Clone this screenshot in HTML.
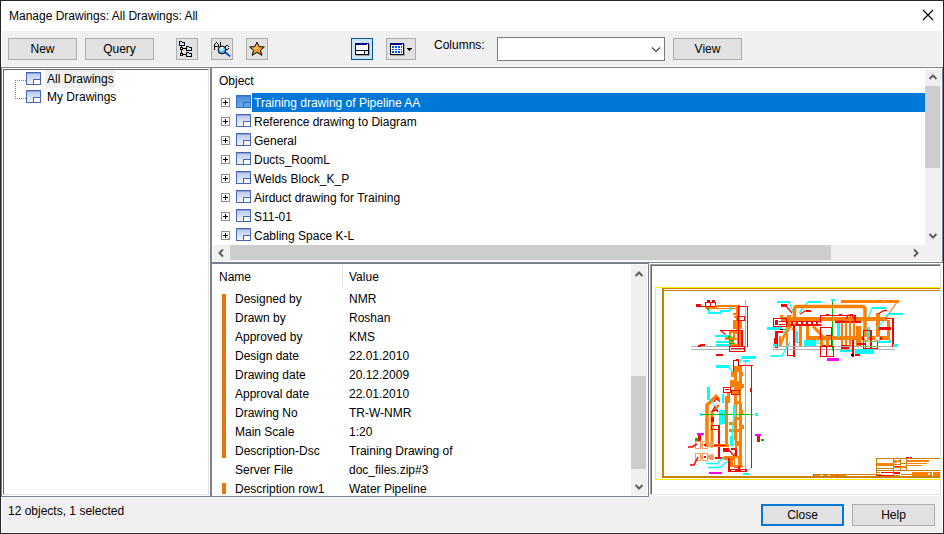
<!DOCTYPE html>
<html><head><meta charset="utf-8">
<style>
*{box-sizing:border-box;margin:0;padding:0}
html,body{width:944px;height:534px;overflow:hidden;background:#f0f0f0}
body{position:relative;font-family:"Liberation Sans",sans-serif;font-size:12px;color:#000}
.a{position:absolute}
.t{position:absolute;white-space:nowrap;line-height:14px;height:14px}
.btn{position:absolute;background:#e1e1e1;border:1px solid #adadad;text-align:center;line-height:20px;height:22px}
.ib{position:absolute;background:#e1e1e1;border:1px solid #adadad;width:22px;height:22px}
.row{position:absolute;height:19px;line-height:19px;white-space:nowrap}
</style></head><body>
<!-- window frame -->
<div class="a" style="left:0;top:0;width:944px;height:534px;border:1px solid #262626;background:#f0f0f0"></div>
<div class="a" style="left:1px;top:1px;width:942px;height:30px;background:#fff"></div>
<div class="a" style="left:1px;top:31px;width:1px;height:502px;background:#fff"></div>
<div class="a" style="left:942px;top:31px;width:1px;height:502px;background:#fff"></div>
<div class="a" style="left:1px;top:532px;width:942px;height:1px;background:#fff"></div>
<div class="t" style="left:9px;top:9px">Manage Drawings: All Drawings: All</div>
<svg class="a" style="left:922px;top:9px" width="12" height="12" viewBox="0 0 12 12"><path d="M1 1L11 11M11 1L1 11" stroke="#000" stroke-width="1.1"/></svg>

<!-- toolbar -->
<div class="btn" style="left:8px;top:38px;width:69px">New</div>
<div class="btn" style="left:85px;top:38px;width:69px">Query</div>
<div class="ib" style="left:176px;top:38px"></div>
<div class="ib" style="left:211px;top:38px"></div>
<div class="ib" style="left:246px;top:38px"></div>
<div class="ib" style="left:351px;top:38px;background:#cce4f7;border-color:#005499"></div>
<div class="ib" style="left:386px;top:38px;width:30px"></div>

<svg class="a" style="left:176px;top:38px" width="22" height="22" viewBox="0 0 22 22" shape-rendering="crispEdges"><rect x="3" y="3" width="3" height="1" fill="#000"/><rect x="3" y="4" width="6" height="4" fill="#000"/><rect x="4" y="4" width="2" height="1" fill="#c6ecfb"/><rect x="4" y="5" width="4" height="2" fill="#c6ecfb"/><rect x="10" y="8" width="3" height="1" fill="#000"/><rect x="10" y="9" width="6" height="4" fill="#000"/><rect x="11" y="9" width="2" height="1" fill="#c6ecfb"/><rect x="11" y="10" width="4" height="2" fill="#c6ecfb"/><rect x="10" y="14" width="3" height="1" fill="#000"/><rect x="10" y="15" width="6" height="4" fill="#000"/><rect x="11" y="15" width="2" height="1" fill="#c6ecfb"/><rect x="11" y="16" width="4" height="2" fill="#c6ecfb"/><rect x="5" y="8" width="1" height="8" fill="#000"/><rect x="4" y="9" width="3" height="3" fill="#000"/><rect x="5" y="10" width="1" height="1" fill="#fff"/><rect x="4" y="15" width="3" height="3" fill="#000"/><rect x="5" y="16" width="1" height="1" fill="#fff"/><rect x="7" y="10" width="3" height="1" fill="#000"/><rect x="7" y="16" width="3" height="1" fill="#000"/></svg>
<svg class="a" style="left:211px;top:38px" width="22" height="22" viewBox="0 0 22 22" shape-rendering="crispEdges"><defs><radialGradient id="lens" cx="0.45" cy="0.35" r="0.6"><stop offset="0" stop-color="#e8f8ff"/><stop offset="0.45" stop-color="#8fd4ff"/><stop offset="1" stop-color="#1e8ef0"/></radialGradient></defs><rect x="5" y="4" width="1" height="1" fill="#000"/><rect x="4" y="5" width="1" height="1" fill="#000"/><rect x="6" y="5" width="1" height="1" fill="#000"/><rect x="3" y="6" width="1" height="6" fill="#000"/><rect x="7" y="6" width="1" height="3" fill="#000"/><rect x="3" y="8" width="5" height="1" fill="#000"/><rect x="9" y="4" width="1" height="5" fill="#000"/><rect x="15" y="7" width="2" height="1" fill="#000"/><rect x="14" y="8" width="1" height="3" fill="#000"/><rect x="15" y="11" width="2" height="1" fill="#000"/><rect x="17" y="8" width="1" height="1" fill="#000"/><rect x="17" y="10" width="1" height="1" fill="#000"/><path d="M14 14.2L19.2 18.4" stroke="#0040ff" stroke-width="1.8" shape-rendering="auto"/><circle cx="11" cy="12" r="3.9" fill="url(#lens)" stroke="#000" stroke-width="1" shape-rendering="auto"/><rect x="10" y="9" width="2" height="1" fill="#fff"/></svg>
<svg class="a" style="left:246px;top:38px" width="22" height="22" viewBox="0 0 22 22"><defs><linearGradient id="stg" x1="0" y1="0" x2="0.3" y2="1"><stop offset="0" stop-color="#ffc860"/><stop offset="1" stop-color="#f08a10"/></linearGradient></defs><path d="M11 4.2L13.1 8.6L18.3 9L14.5 12.3L15.8 17.3L11 14.3L6.2 17.3L7.5 12.3L3.7 9L8.9 8.6Z" fill="url(#stg)" stroke="#000" stroke-width="1" stroke-linejoin="miter" stroke-miterlimit="3"/><path d="M9.6 9.6L10.4 10.8" stroke="#fff2c0" stroke-width="1.1"/></svg>
<svg class="a" style="left:351px;top:38px" width="22" height="22" viewBox="0 0 22 22" shape-rendering="crispEdges">
<rect x="5" y="6" width="14" height="12" fill="#9aa6b0"/>
<rect x="4" y="5" width="14" height="12" fill="#000"/>
<rect x="4" y="5" width="14" height="2" fill="#000080"/>
<rect x="5" y="7" width="12" height="5" fill="#fff"/>
<rect x="5" y="13" width="8" height="3" fill="#fff"/>
<rect x="14" y="13" width="3" height="3" fill="#d0f0ff"/>
<rect x="16" y="6" width="1" height="1" fill="#fff"/>
</svg>
<svg class="a" style="left:386px;top:38px" width="30" height="22" viewBox="0 0 30 22" shape-rendering="crispEdges">
<rect x="5" y="6" width="14" height="12" fill="#a8a8a8"/>
<rect x="4" y="5" width="14" height="12" fill="#000"/>
<rect x="4" y="5" width="14" height="2" fill="#000080"/>
<rect x="5" y="7" width="12" height="9" fill="#fff"/><rect x="16" y="6" width="1" height="1" fill="#fff"/>
<g fill="#0050ff"><rect x="6" y="8" width="2" height="2"/><rect x="9" y="8" width="2" height="2"/><rect x="12" y="8" width="2" height="2"/><rect x="15" y="8" width="1" height="2"/>
<rect x="6" y="11" width="2" height="1"/><rect x="9" y="11" width="2" height="1"/><rect x="12" y="11" width="2" height="1"/><rect x="15" y="11" width="1" height="1"/>
<rect x="6" y="13" width="2" height="2"/><rect x="9" y="13" width="2" height="2"/><rect x="12" y="13" width="2" height="2"/><rect x="15" y="13" width="1" height="2"/></g>
<rect x="21" y="10" width="5" height="1" fill="#000"/><rect x="22" y="11" width="3" height="1" fill="#000"/><rect x="23" y="12" width="1" height="1" fill="#000"/>
</svg>
<div class="t" style="left:434px;top:38px">Columns:</div>
<div class="a" style="left:497px;top:37px;width:168px;height:24px;background:#fff;border:1px solid #7a7a7a"></div>
<svg class="a" style="left:651px;top:47px" width="10" height="6" viewBox="0 0 10 6"><path d="M1 0.5L5 4.5L9 0.5" fill="none" stroke="#444" stroke-width="1.2"/></svg>
<div class="btn" style="left:673px;top:38px;width:69px">View</div>


<div class="a" style="left:1px;top:66px;width:942px;height:1px;background:#fafafa;"></div>
<div class="a" style="left:1px;top:497px;width:649px;height:1px;background:#fafafa;"></div>
<div class="a" style="left:1px;top:67px;width:942px;height:1px;background:#7a818c;"></div>
<div class="a" style="left:1px;top:496px;width:648px;height:1px;background:#7a818c;"></div>
<div class="a" style="left:1px;top:67px;width:1px;height:430px;background:#7a818c;"></div>
<div class="a" style="left:942px;top:67px;width:1px;height:196px;background:#7a818c;"></div>
<div class="a" style="left:2px;top:68px;width:208px;height:428px;background:#fff;"></div>
<div class="a" style="left:3px;top:69px;width:206px;height:426px;background:#fff;border-top:1px solid #696969;border-left:1px solid #696969;border-right:1px solid #e3e3e3;border-bottom:1px solid #e3e3e3"></div>
<div class="a" style="left:210px;top:67px;width:2px;height:430px;background:#7a818c;"></div>
<div class="a" style="left:212px;top:68px;width:730px;height:194px;background:#fff;"></div>
<div class="a" style="left:212px;top:262px;width:731px;height:1px;background:#7a818c;"></div>
<div class="a" style="left:212px;top:263px;width:437px;height:1px;background:#7a818c;"></div>
<div class="a" style="left:212px;top:264px;width:436px;height:232px;background:#fff;"></div>
<div class="a" style="left:648px;top:263px;width:1px;height:234px;background:#7a818c;"></div>
<div class="a" style="left:649px;top:263px;width:294px;height:233px;background:#fff;"></div>
<div class="a" style="left:650px;top:264px;width:291px;height:231px;background:#fff;border-top:1px solid #a0a0a0;border-left:1px solid #a0a0a0;border-right:1px solid #e3e3e3;border-bottom:1px solid #e3e3e3"></div>
<div class="a" style="left:651px;top:265px;width:289px;height:229px;background:#fff;border-top:1px solid #696969;border-left:1px solid #696969"></div>
<svg width="0" height="0" style="position:absolute"><defs><linearGradient id="gi" x1="0" y1="0" x2="0" y2="1"><stop offset="0" stop-color="#bccbec"/><stop offset="1" stop-color="#f2f5fc"/></linearGradient><linearGradient id="gs" x1="0" y1="0" x2="0" y2="1"><stop offset="0" stop-color="#4f90dc"/><stop offset="1" stop-color="#6aa8e8"/></linearGradient></defs></svg>
<div class="a" style="left:45px;top:70px;width:70px;height:18px;background:#f0f0f0;"></div>
<div class="t" style="left:47px;top:72px;">All Drawings</div>
<div class="t" style="left:47px;top:90px;">My Drawings</div>
<svg class="a" style="left:15px;top:80px" width="12" height="20" viewBox="0 0 12 20" shape-rendering="crispEdges"><g fill="#808080"><rect x="0" y="0" width="1" height="1"/><rect x="0" y="2" width="1" height="1"/><rect x="0" y="4" width="1" height="1"/><rect x="0" y="6" width="1" height="1"/><rect x="0" y="8" width="1" height="1"/><rect x="0" y="10" width="1" height="1"/><rect x="0" y="12" width="1" height="1"/><rect x="0" y="14" width="1" height="1"/><rect x="0" y="16" width="1" height="1"/><rect x="0" y="18" width="1" height="1"/><rect x="2" y="0" width="1" height="1"/><rect x="2" y="18" width="1" height="1"/><rect x="4" y="0" width="1" height="1"/><rect x="4" y="18" width="1" height="1"/><rect x="6" y="0" width="1" height="1"/><rect x="6" y="18" width="1" height="1"/><rect x="8" y="0" width="1" height="1"/><rect x="8" y="18" width="1" height="1"/><rect x="10" y="0" width="1" height="1"/><rect x="10" y="18" width="1" height="1"/></g></svg>
<svg class="a" style="left:26px;top:72px" width="15" height="13" viewBox="0 0 15 13" shape-rendering="crispEdges"><rect x="0" y="0" width="15" height="13" fill="#4466b8"/><rect x="1" y="2" width="13" height="10" fill="url(#gi)"/><rect x="0" y="1" width="15" height="1" fill="#5a78c0"/><rect x="1" y="1" width="13" height="1" fill="#8fa5d8"/><rect x="7" y="7" width="8" height="6" fill="#4466b8"/><rect x="8" y="8" width="6" height="4" fill="#fff"/></svg>
<svg class="a" style="left:26px;top:90px" width="15" height="13" viewBox="0 0 15 13" shape-rendering="crispEdges"><rect x="0" y="0" width="15" height="13" fill="#4466b8"/><rect x="1" y="2" width="13" height="10" fill="url(#gi)"/><rect x="0" y="1" width="15" height="1" fill="#5a78c0"/><rect x="1" y="1" width="13" height="1" fill="#8fa5d8"/><rect x="7" y="7" width="8" height="6" fill="#4466b8"/><rect x="8" y="8" width="6" height="4" fill="#fff"/></svg>
<div class="t" style="left:219px;top:74px;">Object</div>
<div class="a" style="left:252px;top:93px;width:673px;height:19px;background:#0078d7;"></div>
<div class="a" style="left:221px;top:98px;width:9px;height:9px;background:#fff;border:1px solid #919191"></div>
<div class="a" style="left:223px;top:102px;width:5px;height:1px;background:#000;"></div>
<div class="a" style="left:225px;top:100px;width:1px;height:5px;background:#000;"></div>
<svg class="a" style="left:236px;top:95px" width="15" height="13" viewBox="0 0 15 13" shape-rendering="crispEdges"><rect x="0" y="0" width="15" height="13" fill="#2a70c8"/><rect x="1" y="2" width="13" height="10" fill="url(#gs)"/><rect x="0" y="1" width="15" height="1" fill="#3a80d0"/><rect x="7" y="7" width="8" height="6" fill="#2a70c8"/><rect x="8" y="8" width="6" height="4" fill="#62a3e6"/></svg>
<div class="t" style="left:254px;top:96px;color:#fff">Training drawing of Pipeline AA</div>
<div class="a" style="left:221px;top:117px;width:9px;height:9px;background:#fff;border:1px solid #919191"></div>
<div class="a" style="left:223px;top:121px;width:5px;height:1px;background:#000;"></div>
<div class="a" style="left:225px;top:119px;width:1px;height:5px;background:#000;"></div>
<svg class="a" style="left:236px;top:114px" width="15" height="13" viewBox="0 0 15 13" shape-rendering="crispEdges"><rect x="0" y="0" width="15" height="13" fill="#4466b8"/><rect x="1" y="2" width="13" height="10" fill="url(#gi)"/><rect x="0" y="1" width="15" height="1" fill="#5a78c0"/><rect x="1" y="1" width="13" height="1" fill="#8fa5d8"/><rect x="7" y="7" width="8" height="6" fill="#4466b8"/><rect x="8" y="8" width="6" height="4" fill="#fff"/></svg>
<div class="t" style="left:254px;top:115px;">Reference drawing to Diagram</div>
<div class="a" style="left:221px;top:136px;width:9px;height:9px;background:#fff;border:1px solid #919191"></div>
<div class="a" style="left:223px;top:140px;width:5px;height:1px;background:#000;"></div>
<div class="a" style="left:225px;top:138px;width:1px;height:5px;background:#000;"></div>
<svg class="a" style="left:236px;top:133px" width="15" height="13" viewBox="0 0 15 13" shape-rendering="crispEdges"><rect x="0" y="0" width="15" height="13" fill="#4466b8"/><rect x="1" y="2" width="13" height="10" fill="url(#gi)"/><rect x="0" y="1" width="15" height="1" fill="#5a78c0"/><rect x="1" y="1" width="13" height="1" fill="#8fa5d8"/><rect x="7" y="7" width="8" height="6" fill="#4466b8"/><rect x="8" y="8" width="6" height="4" fill="#fff"/></svg>
<div class="t" style="left:254px;top:134px;">General</div>
<div class="a" style="left:221px;top:155px;width:9px;height:9px;background:#fff;border:1px solid #919191"></div>
<div class="a" style="left:223px;top:159px;width:5px;height:1px;background:#000;"></div>
<div class="a" style="left:225px;top:157px;width:1px;height:5px;background:#000;"></div>
<svg class="a" style="left:236px;top:152px" width="15" height="13" viewBox="0 0 15 13" shape-rendering="crispEdges"><rect x="0" y="0" width="15" height="13" fill="#4466b8"/><rect x="1" y="2" width="13" height="10" fill="url(#gi)"/><rect x="0" y="1" width="15" height="1" fill="#5a78c0"/><rect x="1" y="1" width="13" height="1" fill="#8fa5d8"/><rect x="7" y="7" width="8" height="6" fill="#4466b8"/><rect x="8" y="8" width="6" height="4" fill="#fff"/></svg>
<div class="t" style="left:254px;top:153px;">Ducts_RoomL</div>
<div class="a" style="left:221px;top:174px;width:9px;height:9px;background:#fff;border:1px solid #919191"></div>
<div class="a" style="left:223px;top:178px;width:5px;height:1px;background:#000;"></div>
<div class="a" style="left:225px;top:176px;width:1px;height:5px;background:#000;"></div>
<svg class="a" style="left:236px;top:171px" width="15" height="13" viewBox="0 0 15 13" shape-rendering="crispEdges"><rect x="0" y="0" width="15" height="13" fill="#4466b8"/><rect x="1" y="2" width="13" height="10" fill="url(#gi)"/><rect x="0" y="1" width="15" height="1" fill="#5a78c0"/><rect x="1" y="1" width="13" height="1" fill="#8fa5d8"/><rect x="7" y="7" width="8" height="6" fill="#4466b8"/><rect x="8" y="8" width="6" height="4" fill="#fff"/></svg>
<div class="t" style="left:254px;top:172px;">Welds Block_K_P</div>
<div class="a" style="left:221px;top:193px;width:9px;height:9px;background:#fff;border:1px solid #919191"></div>
<div class="a" style="left:223px;top:197px;width:5px;height:1px;background:#000;"></div>
<div class="a" style="left:225px;top:195px;width:1px;height:5px;background:#000;"></div>
<svg class="a" style="left:236px;top:190px" width="15" height="13" viewBox="0 0 15 13" shape-rendering="crispEdges"><rect x="0" y="0" width="15" height="13" fill="#4466b8"/><rect x="1" y="2" width="13" height="10" fill="url(#gi)"/><rect x="0" y="1" width="15" height="1" fill="#5a78c0"/><rect x="1" y="1" width="13" height="1" fill="#8fa5d8"/><rect x="7" y="7" width="8" height="6" fill="#4466b8"/><rect x="8" y="8" width="6" height="4" fill="#fff"/></svg>
<div class="t" style="left:254px;top:191px;">Airduct drawing for Training</div>
<div class="a" style="left:221px;top:212px;width:9px;height:9px;background:#fff;border:1px solid #919191"></div>
<div class="a" style="left:223px;top:216px;width:5px;height:1px;background:#000;"></div>
<div class="a" style="left:225px;top:214px;width:1px;height:5px;background:#000;"></div>
<svg class="a" style="left:236px;top:209px" width="15" height="13" viewBox="0 0 15 13" shape-rendering="crispEdges"><rect x="0" y="0" width="15" height="13" fill="#4466b8"/><rect x="1" y="2" width="13" height="10" fill="url(#gi)"/><rect x="0" y="1" width="15" height="1" fill="#5a78c0"/><rect x="1" y="1" width="13" height="1" fill="#8fa5d8"/><rect x="7" y="7" width="8" height="6" fill="#4466b8"/><rect x="8" y="8" width="6" height="4" fill="#fff"/></svg>
<div class="t" style="left:254px;top:210px;">S11-01</div>
<div class="a" style="left:221px;top:231px;width:9px;height:9px;background:#fff;border:1px solid #919191"></div>
<div class="a" style="left:223px;top:235px;width:5px;height:1px;background:#000;"></div>
<div class="a" style="left:225px;top:233px;width:1px;height:5px;background:#000;"></div>
<svg class="a" style="left:236px;top:228px" width="15" height="13" viewBox="0 0 15 13" shape-rendering="crispEdges"><rect x="0" y="0" width="15" height="13" fill="#4466b8"/><rect x="1" y="2" width="13" height="10" fill="url(#gi)"/><rect x="0" y="1" width="15" height="1" fill="#5a78c0"/><rect x="1" y="1" width="13" height="1" fill="#8fa5d8"/><rect x="7" y="7" width="8" height="6" fill="#4466b8"/><rect x="8" y="8" width="6" height="4" fill="#fff"/></svg>
<div class="t" style="left:254px;top:229px;">Cabling Space K-L</div>
<div class="a" style="left:925px;top:69px;width:16px;height:176px;background:#f0f0f0;"></div>
<div class="a" style="left:925px;top:86px;width:15px;height:82px;background:#cdcdcd;"></div>
<svg class="a" style="left:925px;top:69px" width="16" height="16" viewBox="0 0 16 16"><path d="M4.5 10L8 6.5L11.5 10" fill="none" stroke="#606060" stroke-width="2"/></svg>
<svg class="a" style="left:925px;top:228px" width="16" height="16" viewBox="0 0 16 16"><path d="M4.5 6L8 9.5L11.5 6" fill="none" stroke="#606060" stroke-width="2"/></svg>
<div class="a" style="left:213px;top:245px;width:728px;height:16px;background:#f0f0f0;"></div>
<div class="a" style="left:230px;top:245px;width:601px;height:15px;background:#cdcdcd;"></div>
<svg class="a" style="left:213px;top:245px" width="16" height="16" viewBox="0 0 16 16"><path d="M10 4.5L6.5 8L10 11.5" fill="none" stroke="#606060" stroke-width="2"/></svg>
<svg class="a" style="left:908px;top:245px" width="16" height="16" viewBox="0 0 16 16"><path d="M6 4.5L9.5 8L6 11.5" fill="none" stroke="#606060" stroke-width="2"/></svg>
<div class="t" style="left:219px;top:270px;">Name</div>
<div class="t" style="left:349px;top:270px;">Value</div>
<div class="a" style="left:342px;top:265px;width:1px;height:24px;background:#e5e5e5;"></div>
<div class="a" style="left:222px;top:294px;width:4px;height:164px;background:#e8720c;"></div>
<div class="a" style="left:222px;top:483px;width:4px;height:11px;background:#e8720c;"></div>
<div class="t" style="left:235px;top:292px;">Designed by</div>
<div class="t" style="left:349px;top:292px;">NMR</div>
<div class="t" style="left:235px;top:311px;">Drawn by</div>
<div class="t" style="left:349px;top:311px;">Roshan</div>
<div class="t" style="left:235px;top:330px;">Approved by</div>
<div class="t" style="left:349px;top:330px;">KMS</div>
<div class="t" style="left:235px;top:349px;">Design date</div>
<div class="t" style="left:349px;top:349px;">22.01.2010</div>
<div class="t" style="left:235px;top:368px;">Drawing date</div>
<div class="t" style="left:349px;top:368px;">20.12.2009</div>
<div class="t" style="left:235px;top:387px;">Approval date</div>
<div class="t" style="left:349px;top:387px;">22.01.2010</div>
<div class="t" style="left:235px;top:406px;">Drawing No</div>
<div class="t" style="left:349px;top:406px;">TR-W-NMR</div>
<div class="t" style="left:235px;top:425px;">Main Scale</div>
<div class="t" style="left:349px;top:425px;">1:20</div>
<div class="t" style="left:235px;top:444px;">Description-Dsc</div>
<div class="t" style="left:349px;top:444px;">Training Drawing of</div>
<div class="t" style="left:235px;top:463px;">Server File</div>
<div class="t" style="left:349px;top:463px;">doc_files.zip#3</div>
<div class="t" style="left:235px;top:482px;">Description row1</div>
<div class="t" style="left:349px;top:482px;">Water Pipeline</div>
<div class="a" style="left:631px;top:265px;width:16px;height:230px;background:#f0f0f0;"></div>
<div class="a" style="left:631px;top:376px;width:15px;height:93px;background:#cdcdcd;"></div>
<svg class="a" style="left:631px;top:266px" width="16" height="16" viewBox="0 0 16 16"><path d="M4.5 10L8 6.5L11.5 10" fill="none" stroke="#606060" stroke-width="2"/></svg>
<svg class="a" style="left:631px;top:479px" width="16" height="16" viewBox="0 0 16 16"><path d="M4.5 6L8 9.5L11.5 6" fill="none" stroke="#606060" stroke-width="2"/></svg>
<svg class="a" style="left:652px;top:266px" width="288" height="228" viewBox="652 266 288 228" shape-rendering="crispEdges"><rect x="655" y="287" width="290" height="1" fill="#ffee00"/><rect x="655" y="287" width="1" height="193" fill="#ffee00"/><rect x="655" y="479" width="290" height="1" fill="#ffee00"/><rect x="662" y="288" width="280" height="1" fill="#cc8000"/><rect x="662" y="288" width="2" height="190" fill="#cc8000"/><rect x="664" y="290" width="278" height="1" fill="#cc8000"/><rect x="662" y="476" width="280" height="2" fill="#cc8000"/><rect x="696" y="304" width="5" height="3" fill="#ff0000"/><rect x="700" y="306" width="6" height="1" fill="#ff0000"/><rect x="705" y="302" width="11" height="1" fill="#ff0000"/><rect x="705" y="306" width="11" height="1" fill="#ff0000"/><rect x="705" y="302" width="1" height="5" fill="#ff0000"/><rect x="715" y="302" width="1" height="5" fill="#ff0000"/><rect x="710" y="302" width="1" height="5" fill="#ff0000"/><rect x="707" y="300" width="3" height="2" fill="#ff0000"/><rect x="712" y="300" width="3" height="2" fill="#ff0000"/><rect x="715" y="305" width="22" height="2" fill="#ff8000"/><rect x="705" y="307" width="32" height="2" fill="#ff8000"/><rect x="717" y="307" width="19" height="1" fill="#ffffff"/><rect x="708" y="308" width="2" height="6" fill="#00ffff"/><rect x="708" y="312" width="13" height="2" fill="#00ffff"/><rect x="720" y="310" width="10" height="2" fill="#00ffff"/><rect x="729" y="307" width="2" height="4" fill="#00ffff"/><rect x="707" y="308" width="2" height="2" fill="#00c000"/><rect x="736" y="305" width="4" height="26" fill="#ff8000"/><rect x="733" y="313" width="4" height="2" fill="#ff8000"/><rect x="734" y="316" width="3" height="2" fill="#ff8000"/><rect x="733" y="320" width="9" height="9" fill="#ff8000"/><rect x="729" y="331" width="13" height="16" fill="#ff8000"/><rect x="725" y="337" width="6" height="3" fill="#ff8000"/><rect x="731" y="333" width="2" height="4" fill="#ffffff"/><rect x="735" y="334" width="2" height="4" fill="#ffffff"/><rect x="734" y="340" width="3" height="4" fill="#ffffff"/><rect x="737" y="316" width="8" height="1" fill="#ff0000"/><rect x="737" y="320" width="8" height="1" fill="#ff0000"/><rect x="737" y="316" width="1" height="5" fill="#ff0000"/><rect x="744" y="316" width="1" height="5" fill="#ff0000"/><rect x="738" y="306" width="10" height="1" fill="#ff0000"/><rect x="738" y="346" width="10" height="1" fill="#ff0000"/><rect x="738" y="306" width="1" height="41" fill="#ff0000"/><rect x="747" y="306" width="1" height="41" fill="#ff0000"/><rect x="745" y="300" width="1" height="51" fill="#b0b0b0"/><rect x="720" y="330" width="23" height="1" fill="#ff0000"/><path d="M720.5 330.5 L725.5 334.5" fill="none" stroke="#ff0000" stroke-width="1.2" shape-rendering="auto"/><rect x="741" y="330" width="2" height="17" fill="#ff0000"/><rect x="715" y="335" width="14" height="2" fill="#00ffff"/><rect x="716" y="341" width="13" height="2" fill="#00ffff"/><rect x="716" y="344" width="13" height="2" fill="#00ffff"/><rect x="728" y="336" width="3" height="2" fill="#00c000"/><rect x="729" y="340" width="5" height="1" fill="#00c000"/><rect x="729" y="343" width="6" height="1" fill="#00c000"/><rect x="691" y="346" width="56" height="1" fill="#b0b0b0"/><rect x="691" y="349" width="55" height="1" fill="#b0b0b0"/><rect x="700" y="344" width="5" height="2" fill="#ff0000"/><rect x="698" y="345" width="3" height="2" fill="#ff0000"/><rect x="729" y="346" width="16" height="1" fill="#ff0000"/><rect x="729" y="351" width="16" height="1" fill="#ff0000"/><rect x="729" y="346" width="1" height="6" fill="#ff0000"/><rect x="744" y="346" width="1" height="6" fill="#ff0000"/><rect x="731" y="348" width="13" height="1" fill="#ff0000"/><rect x="716" y="354" width="7" height="2" fill="#ff0000"/><rect x="777" y="301" width="13" height="2" fill="#00ffff"/><path d="M789 302 L793 312" fill="none" stroke="#00ffff" stroke-width="1.2" shape-rendering="auto"/><rect x="808" y="301" width="13" height="2" fill="#00ffff"/><path d="M808 302 L799 313" fill="none" stroke="#00ffff" stroke-width="1.2" shape-rendering="auto"/><rect x="781" y="304" width="6" height="3" fill="#ff0000"/><path d="M786 306 L792 313" fill="none" stroke="#ff0000" stroke-width="1.2" shape-rendering="auto"/><rect x="806" y="310" width="5" height="2" fill="#ff0000"/><path d="M806 310.5 L800 314" fill="none" stroke="#ff0000" stroke-width="1.2" shape-rendering="auto"/><rect x="831" y="299" width="4" height="2" fill="#00ffff"/><rect x="832" y="301" width="1" height="50" fill="#00c000"/><rect x="841" y="300" width="58" height="3" fill="#ff8000"/><rect x="873" y="301" width="1" height="1" fill="#ffffff"/><rect x="884" y="301" width="1" height="1" fill="#ffffff"/><path d="M897 302 L886 318" fill="none" stroke="#ff8000" stroke-width="1.2" shape-rendering="auto"/><path d="M794.5 317 L794.5 309 Q794.5 306.5 797 306.5 L862 306.5 Q865 306.5 865 309.5 L865 337" fill="none" stroke="#ff8000" stroke-width="3.5" shape-rendering="auto"/><rect x="787" y="315" width="4" height="2" fill="#ff8000"/><rect x="780" y="315" width="3" height="3" fill="#ff8000"/><rect x="876" y="313" width="4" height="24" fill="#ff8000"/><rect x="872" y="307" width="14" height="2" fill="#00ffff"/><path d="M872 308 L868 318" fill="none" stroke="#00ffff" stroke-width="1.2" shape-rendering="auto"/><path d="M878 314 L884 310.5 L887 310.5" fill="none" stroke="#ff0000" stroke-width="1.3" shape-rendering="auto"/><rect x="888" y="313" width="15" height="2" fill="#00ffff"/><path d="M888 314 L877 329" fill="none" stroke="#00ffff" stroke-width="1.2" shape-rendering="auto"/><rect x="781" y="317" width="106" height="4" fill="#ff8000"/><rect x="773" y="318" width="14" height="1" fill="#ff0000"/><rect x="773" y="326" width="14" height="1" fill="#ff0000"/><rect x="773" y="318" width="1" height="9" fill="#ff0000"/><rect x="786" y="318" width="1" height="9" fill="#ff0000"/><rect x="775" y="320" width="3" height="5" fill="#ff0000"/><rect x="779" y="321" width="7" height="1" fill="#ff0000"/><rect x="779" y="324" width="6" height="1" fill="#ff0000"/><rect x="786" y="321" width="35" height="1" fill="#ff0000"/><rect x="786" y="325" width="35" height="1" fill="#ff0000"/><rect x="786" y="322" width="35" height="3" fill="#ff0000"/><rect x="788" y="322" width="3" height="2" fill="#ffffff"/><rect x="793" y="322" width="3" height="2" fill="#ffffff"/><rect x="798" y="322" width="3" height="2" fill="#ffffff"/><rect x="803" y="322" width="3" height="2" fill="#ffffff"/><rect x="808" y="322" width="3" height="2" fill="#ffffff"/><rect x="813" y="322" width="3" height="2" fill="#ffffff"/><rect x="818" y="322" width="3" height="2" fill="#ffffff"/><rect x="820" y="315" width="36" height="1" fill="#ff0000"/><rect x="820" y="315" width="1" height="8" fill="#ff0000"/><rect x="854" y="315" width="2" height="8" fill="#ff0000"/><rect x="826" y="314" width="3" height="1" fill="#ff0000"/><rect x="839" y="314" width="3" height="1" fill="#ff0000"/><rect x="850" y="314" width="3" height="1" fill="#ff0000"/><rect x="835" y="321" width="26" height="2" fill="#ff0000"/><rect x="767" y="327" width="14" height="3" fill="#00ffff"/><rect x="780" y="329" width="3" height="1" fill="#000"/><rect x="783" y="329" width="3" height="1" fill="#00c000"/><rect x="775" y="331" width="3" height="17" fill="#ff0000"/><rect x="775" y="331" width="8" height="2" fill="#ff0000"/><rect x="774" y="338" width="3" height="9" fill="#ff0000"/><rect x="779" y="336" width="2" height="11" fill="#ff8000"/><path d="M780 346 L790 321" fill="none" stroke="#ff8000" stroke-width="2.5" shape-rendering="auto"/><path d="M796 322 L792 330" fill="none" stroke="#ff8000" stroke-width="1.5" shape-rendering="auto"/><rect x="773" y="344" width="4" height="2" fill="#00ffff"/><path d="M791 326 L786 334" fill="none" stroke="#ff8000" stroke-width="2" shape-rendering="auto"/><rect x="786" y="334" width="2" height="13" fill="#ff8000"/><path d="M788 328 L784 333" fill="none" stroke="#00ffff" stroke-width="1.2" shape-rendering="auto"/><rect x="793" y="325" width="2" height="32" fill="#ff0000"/><rect x="787" y="346" width="8" height="1" fill="#ff0000"/><rect x="787" y="355" width="8" height="1" fill="#ff0000"/><rect x="787" y="346" width="1" height="10" fill="#ff0000"/><rect x="794" y="346" width="1" height="10" fill="#ff0000"/><rect x="795" y="331" width="3" height="12" fill="#00ffff"/><rect x="797" y="342" width="3" height="1" fill="#00ffff"/><rect x="799" y="326" width="3" height="21" fill="#ff8000"/><rect x="806" y="326" width="3" height="14" fill="#ff8000"/><rect x="806" y="336" width="83" height="4" fill="#ff8000"/><path d="M813 326 L824 338" fill="none" stroke="#ff8000" stroke-width="3" shape-rendering="auto"/><rect x="820" y="327" width="12" height="1" fill="#ff0000"/><rect x="820" y="345" width="12" height="1" fill="#ff0000"/><rect x="820" y="327" width="1" height="19" fill="#ff0000"/><rect x="831" y="327" width="1" height="19" fill="#ff0000"/><rect x="826" y="335" width="6" height="1" fill="#ff0000"/><rect x="804" y="340" width="12" height="6" fill="#00ffff"/><path d="M816 341 L826 341" fill="none" stroke="#00ffff" stroke-width="1" shape-rendering="auto"/><path d="M816 343 L825 344" fill="none" stroke="#00ffff" stroke-width="1" shape-rendering="auto"/><rect x="820" y="339" width="3" height="8" fill="#ff8000"/><rect x="826" y="339" width="3" height="8" fill="#ff8000"/><path d="M770 356 L782 356 L790 342" fill="none" stroke="#00ffff" stroke-width="1.3" shape-rendering="auto"/><rect x="837" y="323" width="3" height="14" fill="#00ffff"/><rect x="841" y="322" width="2" height="25" fill="#ff8000"/><rect x="845" y="322" width="2" height="25" fill="#ff8000"/><rect x="849" y="316" width="2" height="31" fill="#ff8000"/><rect x="853" y="322" width="2" height="15" fill="#ff8000"/><path d="M846 319 L848 315 L852 315 L854 319" fill="none" stroke="#ff0000" stroke-width="1.2" shape-rendering="auto"/><path d="M835 323 L838 321 L843 321" fill="none" stroke="#ff0000" stroke-width="1.2" shape-rendering="auto"/><rect x="843" y="325" width="1" height="6" fill="#ffffff"/><rect x="841" y="345" width="8" height="5" fill="#ff0000"/><rect x="773" y="346" width="122" height="1" fill="#b0b0b0"/><rect x="773" y="349" width="122" height="1" fill="#b0b0b0"/><rect x="820" y="346" width="14" height="1" fill="#ff0000"/><rect x="820" y="356" width="14" height="1" fill="#ff0000"/><rect x="820" y="346" width="1" height="11" fill="#ff0000"/><rect x="833" y="346" width="1" height="11" fill="#ff0000"/><rect x="826" y="346" width="1" height="11" fill="#ff0000"/><rect x="827" y="358" width="12" height="3" fill="#ff00ff"/><rect x="840" y="350" width="13" height="2" fill="#00ffff"/><rect x="852" y="340" width="2" height="17" fill="#ff0000"/><rect x="851" y="354" width="3" height="2" fill="#000"/><rect x="855" y="352" width="5" height="4" fill="#ff0000"/><rect x="855" y="349" width="19" height="5" fill="#00ffff"/><rect x="886" y="318" width="8" height="1" fill="#ff0000"/><rect x="892" y="318" width="2" height="29" fill="#ff0000"/><rect x="887" y="320" width="3" height="20" fill="#ff8000"/><rect x="879" y="327" width="12" height="3" fill="#ff0000"/><rect x="856" y="326" width="5" height="20" fill="#ff8000"/><rect x="867" y="327" width="3" height="10" fill="#00ffff"/><rect x="863" y="330" width="8" height="1" fill="#ff0000"/><rect x="863" y="348" width="8" height="1" fill="#ff0000"/><rect x="863" y="330" width="1" height="19" fill="#ff0000"/><rect x="870" y="330" width="1" height="19" fill="#ff0000"/><rect x="865" y="341" width="13" height="1" fill="#ff0000"/><rect x="865" y="348" width="13" height="1" fill="#ff0000"/><rect x="865" y="341" width="1" height="8" fill="#ff0000"/><rect x="877" y="341" width="1" height="8" fill="#ff0000"/><rect x="870" y="330" width="2" height="19" fill="#ff0000"/><rect x="862" y="337" width="2" height="3" fill="#ff0000"/><rect x="864" y="336" width="4" height="5" fill="#f0a060"/><rect x="865" y="337" width="2" height="3" fill="#ffffff"/><rect x="880" y="337" width="2" height="3" fill="#ff0000"/><rect x="875" y="336" width="5" height="5" fill="#f0a060"/><rect x="876" y="337" width="3" height="3" fill="#ffffff"/><rect x="861" y="341" width="21" height="1" fill="#80c060"/><rect x="861" y="346" width="21" height="1" fill="#80c060"/><rect x="878" y="341" width="13" height="2" fill="#00ffff"/><rect x="889" y="339" width="2" height="4" fill="#00ffff"/><rect x="893" y="344" width="5" height="3" fill="#00ffff"/><rect x="857" y="343" width="8" height="2" fill="#ff0000"/><rect x="742" y="356" width="14" height="3" fill="#00ffff"/><path d="M742 358 L738 365" fill="none" stroke="#00ffff" stroke-width="1.2" shape-rendering="auto"/><rect x="743" y="360" width="6" height="2" fill="#00ffff"/><rect x="733" y="360" width="6" height="1" fill="#ff0000"/><rect x="733" y="372" width="6" height="1" fill="#ff0000"/><rect x="733" y="360" width="1" height="13" fill="#ff0000"/><rect x="738" y="360" width="1" height="13" fill="#ff0000"/><rect x="736" y="359" width="3" height="1" fill="#ff0000"/><rect x="738" y="364" width="1" height="1" fill="#000"/><rect x="738" y="365" width="15" height="1" fill="#ff0000"/><rect x="751" y="365" width="1" height="103" fill="#ff0000"/><rect x="750" y="388" width="1" height="4" fill="#ff0000"/><rect x="745" y="360" width="1" height="112" fill="#b0b0b0"/><rect x="716" y="365" width="13" height="3" fill="#00ffff"/><path d="M728 367 L733 372" fill="none" stroke="#00ffff" stroke-width="1.2" shape-rendering="auto"/><rect x="734" y="366" width="8" height="102" fill="#ff8000"/><rect x="731" y="372" width="3" height="5" fill="#ff8000"/><rect x="730" y="380" width="4" height="7" fill="#ff8000"/><rect x="741" y="372" width="2" height="4" fill="#ff8000"/><rect x="741" y="384" width="3" height="4" fill="#ff8000"/><rect x="737" y="372" width="2" height="9" fill="#ffffff"/><rect x="737" y="392" width="2" height="9" fill="#ffffff"/><rect x="737" y="404" width="2" height="13" fill="#ffffff"/><rect x="737" y="420" width="2" height="9" fill="#ffffff"/><rect x="737" y="432" width="2" height="9" fill="#ffffff"/><rect x="737" y="446" width="2" height="10" fill="#ffffff"/><rect x="741" y="390" width="1" height="13" fill="#ffffff"/><rect x="734" y="440" width="1" height="13" fill="#ffffff"/><rect x="729" y="422" width="6" height="3" fill="#ff8000"/><rect x="729" y="429" width="6" height="3" fill="#ff8000"/><rect x="741" y="410" width="2" height="4" fill="#ff8000"/><rect x="741" y="425" width="3" height="4" fill="#ff8000"/><rect x="731" y="390" width="9" height="1" fill="#ff0000"/><rect x="731" y="394" width="9" height="1" fill="#ff0000"/><rect x="731" y="390" width="1" height="5" fill="#ff0000"/><rect x="739" y="390" width="1" height="5" fill="#ff0000"/><rect x="732" y="391" width="7" height="3" fill="#ff8000"/><rect x="723" y="387" width="8" height="1" fill="#ff0000"/><rect x="723" y="392" width="8" height="1" fill="#ff0000"/><rect x="723" y="387" width="1" height="6" fill="#ff0000"/><rect x="730" y="387" width="1" height="6" fill="#ff0000"/><rect x="725" y="389" width="4" height="1" fill="#ff0000"/><rect x="727" y="393" width="3" height="10" fill="#ff8000"/><rect x="725" y="396" width="3" height="51" fill="#ff8000"/><rect x="707" y="387" width="3" height="13" fill="#00ffff"/><rect x="722" y="394" width="2" height="9" fill="#00ffff"/><path d="M707 446 L707 405 L716 396.5 L719 400" fill="none" stroke="#ff8000" stroke-width="3.5" shape-rendering="auto"/><path d="M712 446 L712 412 L719 405" fill="none" stroke="#ff8000" stroke-width="3" shape-rendering="auto"/><path d="M714 402 L717 398 L720 402" fill="none" stroke="#ff0000" stroke-width="1.2" shape-rendering="auto"/><path d="M712 412 L715 406 L718 412" fill="none" stroke="#ff0000" stroke-width="1.2" shape-rendering="auto"/><rect x="713" y="410" width="5" height="1" fill="#ff0000"/><path d="M707 396 L718 410" fill="none" stroke="#00ffff" stroke-width="1" shape-rendering="auto"/><rect x="719" y="410" width="6" height="14" fill="#00ffff"/><path d="M724 423 L716 426" fill="none" stroke="#00ffff" stroke-width="1.2" shape-rendering="auto"/><rect x="702" y="414" width="51" height="1" fill="#00c000"/><rect x="700" y="413" width="2" height="3" fill="#00ffff"/><rect x="755" y="413" width="3" height="3" fill="#00ffff"/><rect x="733" y="405" width="3" height="12" fill="#00ffff"/><path d="M734 416 L731 446" fill="none" stroke="#00ffff" stroke-width="1.5" shape-rendering="auto"/><rect x="718" y="425" width="2" height="34" fill="#ff0000"/><rect x="711" y="425" width="8" height="1" fill="#ff0000"/><rect x="711" y="429" width="8" height="1" fill="#ff0000"/><rect x="711" y="425" width="1" height="5" fill="#ff0000"/><rect x="718" y="425" width="1" height="5" fill="#ff0000"/><rect x="711" y="417" width="3" height="5" fill="#ff0000"/><rect x="697" y="433" width="7" height="2" fill="#ff00ff"/><rect x="698" y="435" width="3" height="6" fill="#ff0000"/><rect x="695" y="438" width="3" height="3" fill="#00c000"/><rect x="755" y="434" width="6" height="2" fill="#ff00ff"/><rect x="757" y="436" width="3" height="6" fill="#ff0000"/><rect x="761" y="439" width="3" height="2" fill="#00c000"/><rect x="705" y="444" width="24" height="3" fill="#ff8000"/><rect x="730" y="436" width="3" height="10" fill="#00ffff"/><rect x="695" y="441" width="6" height="1" fill="#f0a060"/><rect x="695" y="448" width="6" height="1" fill="#f0a060"/><rect x="695" y="441" width="1" height="8" fill="#f0a060"/><rect x="700" y="441" width="1" height="8" fill="#f0a060"/><rect x="702" y="441" width="6" height="1" fill="#f0a060"/><rect x="702" y="448" width="6" height="1" fill="#f0a060"/><rect x="702" y="441" width="1" height="8" fill="#f0a060"/><rect x="707" y="441" width="1" height="8" fill="#f0a060"/><rect x="701" y="443" width="1" height="4" fill="#f0a060"/><rect x="708" y="443" width="6" height="4" fill="#f0a060"/><rect x="710" y="442" width="3" height="6" fill="#f0a060"/><rect x="704" y="444" width="2" height="2" fill="#ff0000"/><rect x="695" y="453" width="6" height="1" fill="#f0a060"/><rect x="695" y="460" width="6" height="1" fill="#f0a060"/><rect x="695" y="453" width="1" height="8" fill="#f0a060"/><rect x="700" y="453" width="1" height="8" fill="#f0a060"/><rect x="702" y="453" width="6" height="1" fill="#f0a060"/><rect x="702" y="460" width="6" height="1" fill="#f0a060"/><rect x="702" y="453" width="1" height="8" fill="#f0a060"/><rect x="707" y="453" width="1" height="8" fill="#f0a060"/><rect x="701" y="455" width="1" height="4" fill="#f0a060"/><rect x="708" y="455" width="6" height="4" fill="#f0a060"/><rect x="710" y="454" width="3" height="6" fill="#f0a060"/><rect x="704" y="456" width="2" height="2" fill="#ff0000"/><path d="M688 447 L692 447 L697 444" fill="none" stroke="#ff0000" stroke-width="1.5" shape-rendering="auto"/><path d="M690 465 L694 465 L698 457" fill="none" stroke="#ff0000" stroke-width="1.5" shape-rendering="auto"/><rect x="714" y="445" width="12" height="1" fill="#ff0000"/><rect x="715" y="457" width="9" height="2" fill="#ff0000"/><rect x="723" y="448" width="6" height="4" fill="#ff0000"/><rect x="731" y="448" width="4" height="2" fill="#ff0000"/><path d="M728 449 L735 457" fill="none" stroke="#ff0000" stroke-width="1.2" shape-rendering="auto"/><rect x="735" y="449" width="2" height="10" fill="#ff0000"/><rect x="724" y="456" width="15" height="4" fill="#ff8000"/><rect x="729" y="458" width="4" height="9" fill="#ff8000"/><rect x="729" y="465" width="14" height="2" fill="#ff8000"/><rect x="735" y="458" width="3" height="7" fill="#ffffff"/><rect x="728" y="469" width="19" height="3" fill="#ff0000"/><rect x="728" y="458" width="2" height="14" fill="#ff0000"/><rect x="738" y="466" width="2" height="6" fill="#ff0000"/><rect x="731" y="470" width="4" height="1" fill="#ffffff"/><rect x="741" y="470" width="4" height="1" fill="#ffffff"/><path d="M706 463.5 L717 463.5 L724 457" fill="none" stroke="#00ffff" stroke-width="1.3" shape-rendering="auto"/><path d="M708 467.5 L720 467.5 L728 461" fill="none" stroke="#00ffff" stroke-width="1.3" shape-rendering="auto"/><rect x="709" y="472" width="13" height="2" fill="#ff00ff"/><rect x="743" y="473" width="6" height="2" fill="#00ffff"/><rect x="813" y="474" width="64" height="1" fill="#cc8000"/><rect x="813" y="474" width="1" height="3" fill="#cc8000"/><rect x="814" y="475" width="32" height="1" fill="#ff8000"/><rect x="813" y="475" width="1" height="1" fill="#ff0000"/><rect x="837" y="475" width="1" height="1" fill="#ff0000"/><rect x="820" y="475" width="3" height="1" fill="#ffffff"/><rect x="828" y="475" width="2" height="1" fill="#ffffff"/><rect x="876" y="458" width="65" height="1" fill="#cc8000"/><rect x="876" y="458" width="1" height="20" fill="#cc8000"/><rect x="893" y="458" width="1" height="20" fill="#cc8000"/><rect x="900" y="458" width="1" height="13" fill="#cc8000"/><rect x="906" y="458" width="1" height="13" fill="#cc8000"/><rect x="877" y="463" width="16" height="3" fill="#ff8000"/><rect x="876" y="468" width="17" height="1" fill="#cc8000"/><rect x="876" y="470" width="65" height="1" fill="#cc8000"/><rect x="894" y="460" width="3" height="3" fill="#ff8000"/><rect x="898" y="460" width="2" height="2" fill="#ff8000"/><rect x="894" y="466" width="12" height="2" fill="#ff8000"/><rect x="895" y="466" width="5" height="1" fill="#ff0000"/><rect x="901" y="463" width="5" height="1" fill="#cc8000"/><rect x="894" y="464" width="6" height="1" fill="#cc8000"/><rect x="906" y="457" width="3" height="1" fill="#ff0000"/><rect x="910" y="457" width="2" height="1" fill="#ff0000"/><rect x="907" y="460" width="22" height="2" fill="#ff8000"/><rect x="907" y="463" width="20" height="1" fill="#ff8000"/><rect x="907" y="465" width="15" height="1" fill="#ff8000"/><rect x="877" y="472" width="3" height="1" fill="#ff8000"/><rect x="881" y="472" width="12" height="1" fill="#ff0000"/><rect x="877" y="475" width="16" height="1" fill="#ff0000"/><rect x="877" y="474" width="4" height="1" fill="#ff8000"/><rect x="894" y="472" width="6" height="2" fill="#ff0000"/><rect x="894" y="475" width="6" height="1" fill="#ff8000"/><rect x="912" y="472" width="20" height="4" fill="#ff8000"/><rect x="933" y="472" width="8" height="4" fill="#ff8000"/><rect x="928" y="473" width="2" height="2" fill="#ffffff"/><rect x="901" y="474" width="11" height="1" fill="#cc8000"/></svg>
<div class="t" style="left:8px;top:504px;">12 objects, 1 selected</div>
<div class="btn" style="left:761px;top:504px;width:83px;border:2px solid #0078d7;line-height:18px">Close</div>
<div class="btn" style="left:852px;top:504px;width:83px">Help</div>
</body></html>
